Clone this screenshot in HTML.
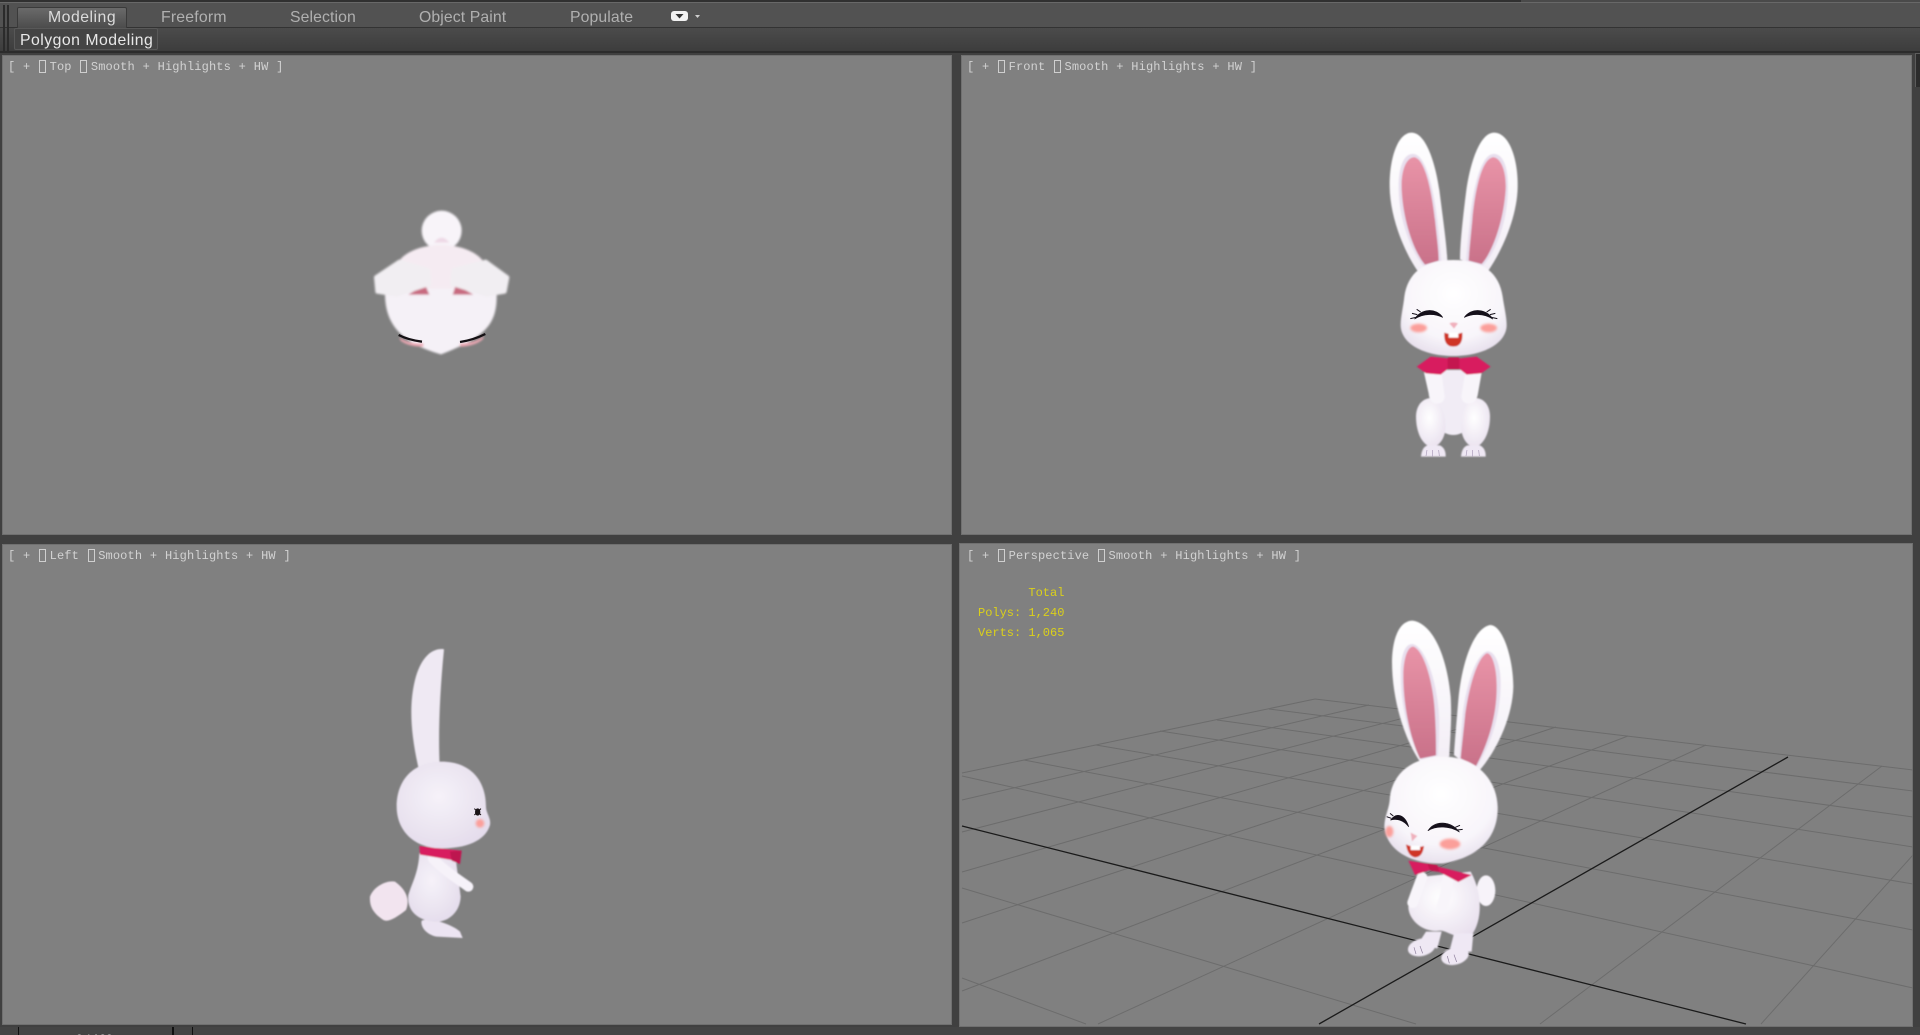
<!DOCTYPE html>
<html lang="en">
<head>
<meta charset="utf-8">
<title>Modeling viewports</title>
<style>
html,body{margin:0;padding:0;width:1920px;height:1035px;overflow:hidden;background:#404040}
*{box-sizing:border-box}
.a{position:absolute}
.vp{position:absolute;background:#808080;box-shadow:inset 0 0 0 1px #707070}
.lbl{position:absolute;font:12px/14px "Liberation Mono",monospace;letter-spacing:.13px;word-spacing:.4px;color:#d2d2d2;white-space:pre;filter:blur(.35px)}
.b{display:inline-block;width:11.5px;height:11px;position:relative;vertical-align:-1px}
.b:after{content:"";position:absolute;left:1px;top:0;width:5px;height:11px;border:1px solid #cfcfcf}
.tab{position:absolute;top:9px;font:15.8px/18px "Liberation Sans",sans-serif;letter-spacing:.1px;color:#b0b0b0;white-space:pre;filter:blur(.3px)}
.st{position:absolute;left:978px;font:12px/14px "Liberation Mono",monospace;color:#dbd01a;white-space:pre;filter:blur(.3px)}
svg{position:absolute;overflow:hidden}
</style>
</head>
<body>
<!-- top chrome -->
<div class="a" style="left:0;top:0;width:1521px;height:2px;background:#303030"></div>
<div class="a" style="left:1521px;top:0;width:399px;height:2px;background:#4a4a4a"></div>
<div class="a" style="left:0;top:2px;width:1920px;height:1px;background:#686868"></div>
<div class="a" style="left:0;top:3px;width:1920px;height:24px;background:#525252"></div>
<div class="a" style="left:0;top:27px;width:1920px;height:1px;background:#333"></div>
<div class="a" style="left:0;top:28px;width:1920px;height:23px;background:linear-gradient(#4b4b4b,#3d3d3d)"></div>
<div class="a" style="left:0;top:51px;width:1920px;height:2px;background:#2c2c2c"></div>
<div class="a" style="left:3px;top:5px;width:2px;height:46px;background:#2b2b2b"></div>
<div class="a" style="left:7px;top:5px;width:2px;height:46px;background:#2b2b2b"></div>

<div class="a" style="left:17px;top:7px;width:110px;height:21px;background:linear-gradient(#6a6a6a,#4c4c4c);border:1px solid #3a3a3a;border-bottom:0;border-radius:2px 2px 0 0"></div>
<div class="tab" style="left:48px;color:#dcdcdc;letter-spacing:.5px">Modeling</div>
<div class="tab" style="left:161px;letter-spacing:.2px">Freeform</div>
<div class="tab" style="left:290px">Selection</div>
<div class="tab" style="left:419px">Object Paint</div>
<div class="tab" style="left:570px">Populate</div>
<svg style="left:668px;top:8px" width="36" height="18" viewBox="0 0 36 18">
<rect x="3" y="3" width="17" height="10" rx="3" fill="#f2f2f2"/>
<path d="M7.500 6h8l-4 4.500z" fill="#333"/>
<path d="M27 7h5l-2.500 3z" fill="#cfcfcf"/>
</svg>
<div class="a" style="left:14px;top:28px;width:144px;height:22px;background:#444;border:1px solid #585858;border-radius:2px"></div>
<div class="tab" style="left:20px;top:32px;color:#e8e8e8;letter-spacing:.48px">Polygon Modeling</div>

<div class="a" style="left:1915px;top:53px;width:5px;height:34px;background:#2c2c2c;border-left:1px solid #5c5c5c;border-top:1px solid #5c5c5c"></div>

<!-- viewports -->
<div class="vp" style="left:2px;top:55px;width:950px;height:480px"></div>
<div class="vp" style="left:961px;top:55px;width:951px;height:480px"></div>
<div class="vp" style="left:2px;top:544px;width:950px;height:481px"></div>
<div class="vp" style="left:959px;top:543px;width:954px;height:484px"></div>

<div class="lbl" style="left:8px;top:60px">[ + <span class="b"></span>Top <span class="b"></span>Smooth + Highlights + HW ]</div>
<div class="lbl" style="left:967px;top:60px">[ + <span class="b"></span>Front <span class="b"></span>Smooth + Highlights + HW ]</div>
<div class="lbl" style="left:8px;top:549px">[ + <span class="b"></span>Left <span class="b"></span>Smooth + Highlights + HW ]</div>
<div class="lbl" style="left:967px;top:549px">[ + <span class="b"></span>Perspective <span class="b"></span>Smooth + Highlights + HW ]</div>
<div class="st" style="top:586px">       Total</div>
<div class="st" style="top:606px">Polys: 1,240</div>
<div class="st" style="top:626px">Verts: 1,065</div>

<!-- perspective grid -->
<svg style="left:960px;top:544px" width="953" height="482" viewBox="960 544 953 482">
<g stroke="#6c6c6c" stroke-width="1" fill="none">
<path d="M1315 699L1913 770M1269 709L1913 791M1217 720L1913 817M1160 731L1913 847M1096 745L1913 884M1024 760L1913 930M962 776L1913 988"/>
<path d="M962 888L1416 1024M962 978L1086 1024"/>
<path d="M1315 699L962 773M1369 705L962 800M1427 712L962 832M1489 720L962 872M1556 727L962 923M1628 736L962 991M1706 745L1098 1024M1882 766L1540 1024M1913 855L1761 1024"/>
</g>
<g stroke="#1a1a1a" stroke-width="1.300" fill="none">
<path d="M962 826L1746 1024"/>
<path d="M1788 757L1319 1024"/>
</g>
</svg>

<svg width="0" height="0" style="left:0;top:0">
<defs>
<filter id="soft" x="-5%" y="-5%" width="110%" height="110%"><feGaussianBlur stdDeviation="2"/></filter>
<filter id="softer" x="-5%" y="-5%" width="110%" height="110%"><feGaussianBlur stdDeviation="3.500"/></filter>
<filter id="ch" x="-30%" y="-30%" width="160%" height="160%"><feGaussianBlur stdDeviation="3"/></filter>
<radialGradient id="head" cx="50%" cy="35%" r="68%"><stop offset="0" stop-color="#ffffff"/><stop offset=".7" stop-color="#f8f5fa"/><stop offset="1" stop-color="#e6deec"/></radialGradient>
<linearGradient id="pink" x1="0" y1="0" x2="0" y2="1"><stop offset="0" stop-color="#e893a7"/><stop offset="1" stop-color="#c97189"/></linearGradient>
<linearGradient id="ear" x1="0" y1="0" x2="0" y2="1"><stop offset="0" stop-color="#fff"/><stop offset="1" stop-color="#f3eef6"/></linearGradient>
<radialGradient id="bod" cx="45%" cy="40%" r="75%"><stop offset="0" stop-color="#fff"/><stop offset="1" stop-color="#e6dcec"/></radialGradient>
<radialGradient id="side" cx="45%" cy="40%" r="68%"><stop offset="0" stop-color="#f6f2f9"/><stop offset="1" stop-color="#e3dbeb"/></radialGradient>
</defs>
</svg>

<!-- FRONT rabbit -->
<svg style="left:1340px;top:110px" width="240" height="360" viewBox="0 0 720 1080">
<g filter="url(#soft)">
<path d="M232 482C190 420 150 320 149 230C148 140 175 68 215 68C255 68 285 150 298 240C308 320 320 400 322 452Z" fill="url(#ear)"/>
<path d="M250 468C218 430 178 340 176 240C174 170 192 128 222 132C258 136 282 240 292 330C298 385 302 420 304 456Z" fill="#e8dfee"/>
<path d="M255 464C225 430 190 340 185 240C182 180 200 140 225 142C255 150 275 240 285 330C290 380 296 420 296 452Z" fill="url(#pink)"/>
<path d="M445 482C487 420 532 320 533 230C534 140 505 68 462 68C422 68 392 150 379 240C369 320 360 400 360 448Z" fill="url(#ear)"/>
<path d="M430 466C465 430 502 340 504 240C506 170 488 128 458 132C422 136 398 240 390 330C384 385 380 420 378 456Z" fill="#e8dfee"/>
<path d="M425 462C455 430 490 340 497 240C500 180 480 140 457 142C425 150 405 240 397 330C392 380 388 420 386 452Z" fill="url(#pink)"/>
<path d="M285 780H395L392 950Q340 1000 288 950Z" fill="#f1ecf5"/>
<path d="M228 920C228 880 255 860 280 865C305 880 320 920 316 960C312 990 295 1010 275 1012C245 1005 228 965 228 920Z" fill="url(#bod)"/>
<path d="M450 920C450 880 425 860 400 865C375 880 360 920 364 960C368 990 385 1010 405 1012C432 1005 450 965 450 920Z" fill="url(#bod)"/>
<path d="M252 788L305 790L314 860Q312 880 292 881Q268 880 266 850Z" fill="#f8f5fa"/>
<path d="M425 788L375 790L364 860Q366 880 386 881Q410 880 414 850Z" fill="#f8f5fa"/>
<path d="M243 1040Q245 1012 262 1006H300Q318 1015 317 1040Z" fill="#efe8f4"/>
<path d="M363 1040Q365 1012 382 1006H420Q438 1015 437 1040Z" fill="#efe8f4"/>
<path d="M340 450C430 450 478 490 488 560C492 590 500 620 500 645C500 700 430 738 340 738C250 738 182 700 182 645C182 620 190 590 193 560C203 490 250 450 340 450Z" fill="url(#head)"/>
<ellipse cx="236" cy="654" rx="25" ry="13" fill="#fb9f9a" filter="url(#ch)"/>
<ellipse cx="446" cy="654" rx="25" ry="13" fill="#fb9f9a" filter="url(#ch)"/>
<path d="M328 640Q340 634 354 640L342 656Z" fill="#f0b0bc"/>
<path d="M313 668Q340 678 367 668Q370 710 340 710Q310 710 313 668Z" fill="#cf3527"/>
<rect x="326" y="668" width="29" height="15" fill="#fff"/>
<path d="M230 770L272 740L326 745V775L302 794L258 790Z" fill="#d81f5e"/>
<path d="M452 770L410 740L356 745V775L380 794L424 790Z" fill="#d81f5e"/>
<rect x="323" y="742" width="35" height="36" rx="4" fill="#c41450"/>
</g>
<g fill="#15101a" stroke="#15101a" stroke-width="2" stroke-linejoin="round">
<path d="M224 627C242 596 288 592 308 622C285 610 250 610 224 627Z"/>
<path d="M373 622C394 592 440 596 458 627C432 610 396 610 373 622Z"/>
</g>
<path d="M228 622L211 626M232 614L216 610M242 606L230 598M454 622L472 626M450 614L466 610M440 606L452 598" stroke="#15101a" stroke-width="3" fill="none"/>
<path d="M258 1038L261 1020M278 1040V1020M298 1038L296 1020M378 1038L381 1020M398 1040V1020M418 1038L416 1020" stroke="#a99bb8" stroke-width="2" fill="none"/>
</svg>

<!-- TOP rabbit -->
<svg style="left:340px;top:190px" width="200" height="180" viewBox="0 0 600 540">
<g filter="url(#softer)">
<circle cx="305" cy="122" r="60" fill="#f8f4f9"/>
<path d="M282 158Q305 128 328 158Z" fill="#eed9e6"/>
<ellipse cx="303" cy="240" rx="135" ry="75" fill="#f5ebf2"/>
<path d="M135 310C170 290 440 290 470 310C472 400 440 440 303 493C180 458 135 400 135 310Z" fill="#f5f1f7"/>
<path d="M178 442Q205 462 250 460L250 470Q205 470 182 452Z" fill="#eea8b4"/>
<path d="M432 438Q405 460 360 460L360 470Q405 468 428 448Z" fill="#eea8b4"/>
<path d="M205 314L255 284L268 314Z" fill="#c86a80"/>
<path d="M400 314L348 284L338 314Z" fill="#c86a80"/>
<path d="M108 262L178 215L264 240L268 282L170 314L112 305Z" fill="#f1eef2" stroke="#f1eef2" stroke-width="12" stroke-linejoin="round"/>
<path d="M502 262L437 215L341 240L337 282L440 314L494 305Z" fill="#f1eef2" stroke="#f1eef2" stroke-width="12" stroke-linejoin="round"/>
</g>
<path d="M176 435Q205 450 246 455M360 456Q400 450 436 432" stroke="#141014" stroke-width="7" fill="none"/>
</svg>

<!-- LEFT rabbit -->
<svg style="left:340px;top:630px" width="180" height="320" viewBox="0 0 540 960">
<g filter="url(#soft)">
<path d="M90 800C100 770 140 750 165 755C200 780 210 810 198 840C170 862 145 878 130 870C100 850 88 830 90 800Z" fill="#f2e4ef"/>
<path d="M245 872C270 860 340 885 360 905L368 924L290 920C260 915 240 890 245 872Z" fill="#ece4f2"/>
<path d="M238 670H345L362 800C360 850 320 880 280 875C230 870 200 840 205 795C215 760 235 730 238 670Z" fill="url(#side)"/>
<path d="M278 685C310 720 350 745 385 770" stroke="#f6f2f9" stroke-width="30" stroke-linecap="round" fill="none"/>
<path d="M308 57C270 55 240 90 225 150C208 220 210 300 235 412L300 424C294 330 298 200 312 58Z" fill="#efe9f3"/>
<path d="M238 648L365 662L360 702L335 690L240 674Z" fill="#d81f5e"/>
<path d="M330 665L365 662L360 702L335 692Z" fill="#bd1450"/>
<path d="M305 395C390 395 438 450 438 530C438 550 454 565 450 585C440 620 400 655 305 655C220 655 170 600 170 530C170 450 220 395 305 395Z" fill="url(#side)"/>
<circle cx="420" cy="580" r="13" fill="#fb9f9a" filter="url(#ch)"/>
</g>
<ellipse cx="413" cy="546" rx="8" ry="11" fill="#1b1418"/>
<path d="M403 536L423 555M403 555L423 536" stroke="#1b1418" stroke-width="3"/>
</svg>

<!-- PERSPECTIVE rabbit -->
<svg style="left:1340px;top:600px" width="240" height="380" viewBox="0 0 720 1140">
<g filter="url(#soft)">
<path d="M240 485C195 420 155 300 156 180C158 110 180 62 218 62C275 70 320 160 332 290C336 360 330 420 328 470Z" fill="url(#ear)"/>
<path d="M244 478C208 420 180 320 182 210C184 160 197 130 218 132C252 138 288 230 296 330C300 390 296 430 294 466Z" fill="#e8dfee"/>
<path d="M240 476C210 415 188 310 190 215C192 170 205 138 220 140C250 150 278 240 284 330C288 390 288 430 288 466Z" fill="url(#pink)"/>
<path d="M410 520C460 470 518 360 520 260C520 180 490 75 450 75C400 85 365 190 355 300C350 360 344 430 342 465Z" fill="url(#ear)"/>
<path d="M408 504C450 440 482 350 482 250C482 190 463 150 440 154C405 168 378 260 368 340C363 400 360 440 358 478Z" fill="#e8dfee"/>
<path d="M408 498C440 440 472 350 470 255C470 200 455 158 440 160C410 175 385 270 375 350C370 400 365 440 362 475Z" fill="url(#pink)"/>
<ellipse cx="438" cy="872" rx="28" ry="46" fill="#f7f3f9"/>
<path d="M250 830L392 815C428 880 428 960 395 1005L380 1012C340 1012 315 990 300 992C250 1000 205 960 205 920Z" fill="url(#bod)"/>
<path d="M246 832L228 880L218 908" stroke="#f8f5fa" stroke-width="32" stroke-linecap="round" fill="none"/>
<path d="M325 830L318 880L306 922" stroke="#f8f5fa" stroke-width="34" stroke-linecap="round" fill="none"/>
<path d="M258 995L305 995L292 1045L232 1035Z" fill="#efe8f4"/>
<path d="M342 1000L400 1000L395 1055L328 1055Z" fill="#efe8f4"/>
<ellipse cx="245" cy="1042" rx="42" ry="26" transform="rotate(-14 245 1042)" fill="#efe8f4"/>
<ellipse cx="345" cy="1068" rx="42" ry="26" transform="rotate(-14 345 1068)" fill="#efe8f4"/>
<path d="M310 470C400 470 470 530 473 620C475 700 430 770 310 790C230 795 140 760 133 680C135 640 148 630 150 590C160 510 230 470 310 470Z" fill="url(#head)"/>
<ellipse cx="148" cy="695" rx="12" ry="17" fill="#fb9f9a" filter="url(#ch)"/>
<ellipse cx="330" cy="732" rx="31" ry="16" fill="#fb9f9a" filter="url(#ch)"/>
<path d="M212 698L232 708L216 724Z" fill="#efb0bc"/>
<path d="M198 733Q225 746 252 738Q248 772 225 772Q203 768 198 733Z" fill="#cf3527"/>
<path d="M212 737H240V750H212Z" fill="#fff"/>
<path d="M205 782L268 792L275 808L225 825Z" fill="#d81f5e"/>
<path d="M275 795L395 825L355 846L298 816Z" fill="#d81f5e"/>
<path d="M262 790L292 795L298 816L270 812Z" fill="#c41450"/>
</g>
<g fill="#15101a" stroke="#15101a" stroke-width="2" stroke-linejoin="round">
<path d="M152 660C170 635 195 645 206 680C190 660 170 655 152 660Z"/>
<path d="M264 692C285 660 332 662 358 696C330 678 290 676 264 692Z"/>
</g>
<path d="M154 655L140 650M160 648L150 640M352 690L368 688M346 682L360 676" stroke="#15101a" stroke-width="3" fill="none"/>
<path d="M222 1042L228 1062M240 1038L248 1060M322 1068L328 1090M342 1064L350 1086" stroke="#8d7f9c" stroke-width="2" fill="none"/>
</svg>

<!-- bottom strip -->
<div class="a" style="left:0;top:1027px;width:1920px;height:8px;background:#444;overflow:hidden">
<div class="a" style="left:18px;top:0;width:1px;height:8px;background:#111"></div>
<div class="a" style="left:172px;top:0;width:2px;height:8px;background:#111"></div>
<div class="a" style="left:192px;top:0;width:1px;height:8px;background:#111"></div>
<div class="a" style="left:76px;top:5px;font:12px/14px 'Liberation Sans',sans-serif;color:#e4e4e4;white-space:pre">0 / 100</div>
</div>
</body>
</html>
